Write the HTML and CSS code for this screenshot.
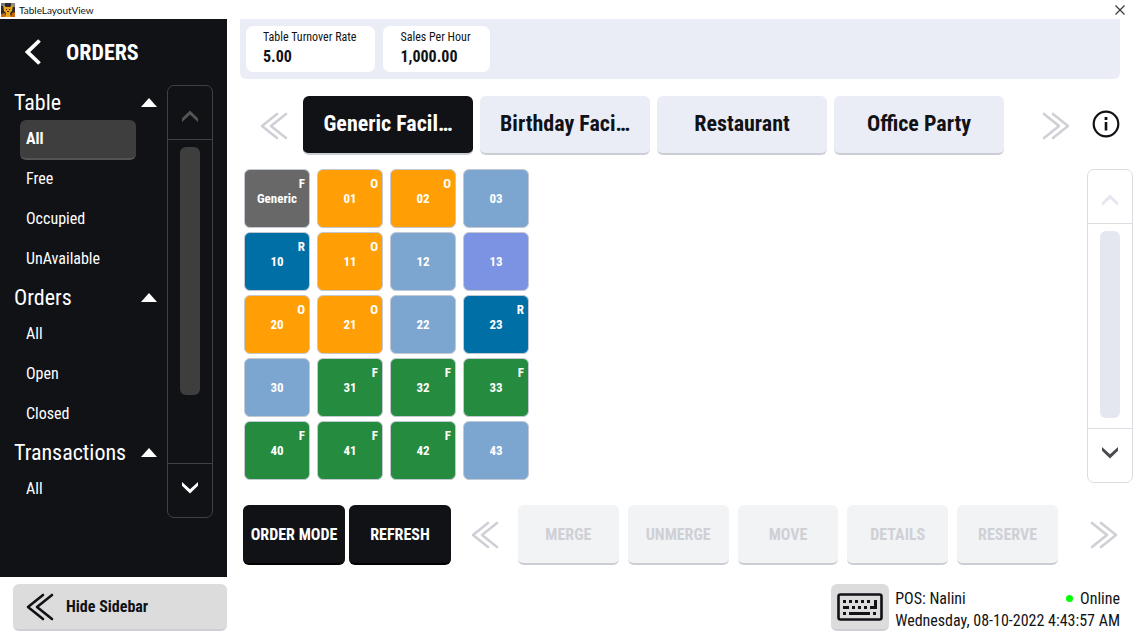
FILE: index.html
```html
<!DOCTYPE html>
<html lang="en">

<head>
    <meta charset="UTF-8">
    <meta name="viewport" content="width=device-width, initial-scale=1.0">
    <title>TableLayoutView</title>
    <link rel="stylesheet" href="styles.css">
</head>

<body>
    <!-- shared icons -->
    <svg class="icon-defs" aria-hidden="true">
        <symbol id="icon-double" viewBox="0 0 28 28">
            <path d="M17 2 L2 14 L17 26 M26 2 L11 14 L26 26" fill="none" stroke="currentColor" stroke-width="2.6" stroke-linecap="round" stroke-linejoin="round"/>
        </symbol>
        <symbol id="icon-up" viewBox="0 0 16 12">
            <path d="M0 8.2 L8 0.5 L16 8.2 V12 L8 4.8 L0 12 Z" fill="currentColor"/>
        </symbol>
        <symbol id="icon-down" viewBox="0 0 16 12">
            <path d="M0 0 L8 7.2 L16 0 V3.8 L8 11.5 L0 3.8 Z" fill="currentColor"/>
        </symbol>
    </svg>

    <header class="titlebar">
        <svg class="app-icon" viewBox="0 0 14 14">
            <rect width="14" height="14" fill="#2e2b2b"/>
            <rect width="4" height="3" fill="#777"/>
            <rect x="10" width="4" height="4" fill="#8a8a8a"/>
            <path d="M2 2 L5 4 H9 L12 2 L11 8 L9 10 L10 14 H4 L5 10 L3 8 Z" fill="#e8a51c"/>
            <path d="M0 11 L4 10 V14 H0 Z M11 10 L14 9 V14 H10 Z" fill="#c66a12"/>
            <rect x="5" y="6" width="1" height="1" fill="#3a2606"/>
            <rect x="8" y="6" width="1" height="1" fill="#3a2606"/>
            <rect x="6" y="8" width="2" height="1" fill="#3a2606"/>
        </svg>
        <span class="titlebar-text">TableLayoutView</span>
        <button class="close-btn" type="button" aria-label="Close">
            <svg viewBox="0 0 10 10"><path d="M0.5 0.5 L9.5 9.5 M9.5 0.5 L0.5 9.5" stroke="#333" stroke-width="1.1"/></svg>
        </button>
    </header>

    <div class="layout">
        <aside class="sidebar">
            <div class="sidebar-header">
                <button class="back-btn" type="button" aria-label="Back">
                    <svg viewBox="0 0 16 26"><path d="M14.5 1.5 L2.6 13 L14.5 24.5" fill="none" stroke="currentColor" stroke-width="3.8"/></svg>
                </button>
                <h1>ORDERS</h1>
            </div>
            <div class="sidebar-body">
                <nav class="menu">
                    <h2>Table <svg viewBox="0 0 16 9"><path d="M0 9 L8 0 L16 9 Z" fill="currentColor"/></svg></h2>
                    <a class="active" href="#">All</a>
                    <a href="#">Free</a>
                    <a href="#">Occupied</a>
                    <a href="#">UnAvailable</a>
                    <h2>Orders <svg viewBox="0 0 16 9"><path d="M0 9 L8 0 L16 9 Z" fill="currentColor"/></svg></h2>
                    <a href="#">All</a>
                    <a href="#">Open</a>
                    <a href="#">Closed</a>
                    <h2>Transactions <svg viewBox="0 0 16 9"><path d="M0 9 L8 0 L16 9 Z" fill="currentColor"/></svg></h2>
                    <a href="#">All</a>
                </nav>
                <div class="scroller scroller-dark">
                    <button type="button" aria-label="Scroll up" disabled><svg><use href="#icon-up"/></svg></button>
                    <div class="track"><div class="thumb"></div></div>
                    <button type="button" aria-label="Scroll down"><svg><use href="#icon-down"/></svg></button>
                </div>
            </div>
        </aside>

        <main class="content">
            <section class="stats">
                <div class="stat">
                    <span>Table Turnover Rate</span>
                    <strong>5.00</strong>
                </div>
                <div class="stat">
                    <span>Sales Per Hour</span>
                    <strong>1,000.00</strong>
                </div>
            </section>

            <section class="facilities">
                <button class="nav-btn" type="button" aria-label="Previous facilities"><svg><use href="#icon-double"/></svg></button>
                <div class="tabs">
                    <button class="tab selected" type="button">Generic Facil…</button>
                    <button class="tab" type="button">Birthday Faci…</button>
                    <button class="tab" type="button">Restaurant</button>
                    <button class="tab" type="button">Office Party</button>
                </div>
                <button class="nav-btn next" type="button" aria-label="Next facilities"><svg><use href="#icon-double"/></svg></button>
                <button class="info-btn" type="button" aria-label="Information">
                    <svg viewBox="0 0 28 28">
                        <circle cx="14" cy="14" r="12.3" fill="none" stroke="currentColor" stroke-width="2.2"/>
                        <path d="M14 12 V20.5" stroke="currentColor" stroke-width="2.6"/>
                        <path d="M14 7 V10" stroke="currentColor" stroke-width="2.8"/>
                    </svg>
                </button>
            </section>

            <section class="floor">
                <div class="tables">
                    <button class="table-tile generic" type="button">Generic<span>F</span></button>
                    <button class="table-tile occupied" type="button">01<span>O</span></button>
                    <button class="table-tile occupied" type="button">02<span>O</span></button>
                    <button class="table-tile" type="button">03</button>
                    <button class="table-tile reserved" type="button">10<span>R</span></button>
                    <button class="table-tile occupied" type="button">11<span>O</span></button>
                    <button class="table-tile" type="button">12</button>
                    <button class="table-tile violet" type="button">13</button>
                    <button class="table-tile occupied" type="button">20<span>O</span></button>
                    <button class="table-tile occupied" type="button">21<span>O</span></button>
                    <button class="table-tile" type="button">22</button>
                    <button class="table-tile reserved" type="button">23<span>R</span></button>
                    <button class="table-tile" type="button">30</button>
                    <button class="table-tile free" type="button">31<span>F</span></button>
                    <button class="table-tile free" type="button">32<span>F</span></button>
                    <button class="table-tile free" type="button">33<span>F</span></button>
                    <button class="table-tile free" type="button">40<span>F</span></button>
                    <button class="table-tile free" type="button">41<span>F</span></button>
                    <button class="table-tile free" type="button">42<span>F</span></button>
                    <button class="table-tile" type="button">43</button>
                </div>
                <div class="scroller">
                    <button type="button" aria-label="Scroll up" disabled><svg><use href="#icon-up"/></svg></button>
                    <div class="track"><div class="thumb"></div></div>
                    <button type="button" aria-label="Scroll down"><svg><use href="#icon-down"/></svg></button>
                </div>
            </section>

            <section class="actions">
                <div class="primary-actions">
                    <button class="action dark" type="button">ORDER MODE</button>
                    <button class="action dark" type="button">REFRESH</button>
                </div>
                <button class="nav-btn" type="button" aria-label="Previous actions"><svg><use href="#icon-double"/></svg></button>
                <div class="table-actions">
                    <button class="action" type="button" disabled>MERGE</button>
                    <button class="action" type="button" disabled>UNMERGE</button>
                    <button class="action" type="button" disabled>MOVE</button>
                    <button class="action" type="button" disabled>DETAILS</button>
                    <button class="action" type="button" disabled>RESERVE</button>
                </div>
                <button class="nav-btn next" type="button" aria-label="Next actions"><svg><use href="#icon-double"/></svg></button>
            </section>
        </main>
    </div>

    <footer class="footer">
        <button class="hide-btn" type="button"><svg><use href="#icon-double"/></svg>Hide Sidebar</button>
        <button class="keyboard-btn" type="button" aria-label="Keyboard">
            <svg viewBox="0 0 46 28">
                <rect x="1.5" y="1.5" width="43" height="25" rx="2" fill="none" stroke="currentColor" stroke-width="2.6"/>
                <g fill="currentColor">
                    <path d="M6 7h3v3H6z M12 7h3v3h-3z M18 7h3v3h-3z M24 7h3v3h-3z M30 7h3v3h-3z"/>
                    <path d="M6 13h6v3H6z M15 13h3v3h-3z M21 13h3v3h-3z M27 13h3v3h-3z"/>
                    <path d="M37 7h3v9h-7v-3h4z"/>
                    <path d="M6 19h3v3H6z M12 19h21v3H12z M36 19h3v3h-3z"/>
                </g>
            </svg>
        </button>
        <div class="status">
            <div class="status-row">
                <span>POS: Nalini</span>
                <span class="online">Online</span>
            </div>
            <div>Wednesday, 08-10-2022 4:43:57 AM</div>
        </div>
    </footer>
</body>

</html>
```
FILE: styles.css
```css
* {
    box-sizing: border-box;
}

body {
    margin: 0;
    min-height: 100vh;
    display: flex;
    flex-direction: column;
    background-color: #fff;
    color: #111216;
    font-family: "Roboto Condensed", "Liberation Sans Narrow", Roboto, sans-serif;
}

button {
    padding: 0;
    border: none;
    background: none;
    color: inherit;
    font-family: inherit;
    cursor: pointer;
}

svg {
    display: block;
}

.icon-defs {
    display: none;
}

/* title bar */
.titlebar {
    display: flex;
    align-items: center;
    gap: 4px;
    height: 19px;
    padding: 0 8px 0 1px;
}

.app-icon {
    width: 14px;
    height: 14px;
}

.titlebar-text {
    flex: 1;
    font-family: Lato, "Open Sans", sans-serif;
    font-size: 10px;
}

.close-btn svg {
    width: 10px;
    height: 10px;
}

.layout {
    flex: 1;
    display: flex;
}

/* sidebar */
.sidebar {
    width: 227px;
    flex-shrink: 0;
    background-color: #111216;
    color: #fff;
}

.sidebar-header {
    display: flex;
    align-items: center;
    gap: 25px;
    height: 66px;
    padding-left: 25px;
}

.back-btn svg {
    width: 16px;
    height: 26px;
}

.sidebar-header h1 {
    margin: 0;
    font-size: 22px;
}

.sidebar-body {
    display: flex;
    gap: 10px;
    padding: 0 14px;
}

.menu {
    flex: 1;
}

.menu h2 {
    display: flex;
    align-items: center;
    justify-content: space-between;
    height: 35px;
    margin: 0;
    font-size: 22px;
    font-weight: normal;
}

.menu h2 svg {
    width: 16px;
    height: 9px;
}

.menu a {
    display: block;
    width: 116px;
    height: 40px;
    margin-left: 6px;
    padding-left: 6px;
    border-radius: 6px;
    color: #fff;
    font-size: 16px;
    line-height: 38px;
    text-decoration: none;
}

.menu a.active {
    background-color: #3e3e3e;
    border-bottom: 2px solid #545454;
    font-weight: bold;
}

/* scroll bars */
.scroller {
    display: flex;
    flex-direction: column;
    width: 46px;
    flex-shrink: 0;
    border: 1px solid #dcdde2;
    border-radius: 7px;
}

.scroller button {
    display: flex;
    align-items: center;
    justify-content: center;
    height: 53px;
    padding-top: 6px;
    color: #4a4a4e;
}

.scroller button:last-child {
    padding: 0 0 6px;
}

.scroller button:disabled {
    color: #e4e7f0;
}

.scroller svg {
    width: 16px;
    height: 12px;
}

.track {
    flex: 1;
    display: flex;
    justify-content: center;
    padding: 7px 0 10px;
    border-top: 1px solid #dcdde2;
    border-bottom: 1px solid #dcdde2;
}

.thumb {
    width: 20px;
    border-radius: 6px;
    background-color: #e4e7f0;
}

.scroller-dark,
.scroller-dark .track {
    border-color: #414145;
}

.scroller-dark {
    height: 433px;
}

.scroller-dark button {
    color: #fff;
}

.scroller-dark button:disabled {
    color: #545454;
}

.scroller-dark .thumb {
    height: 81%;
    background-color: #3e3e3e;
}

/* main area */
.content {
    flex: 1;
    min-width: 0;
    display: flex;
    flex-direction: column;
    padding-left: 13px;
}

.stats {
    display: flex;
    gap: 8px;
    height: 60px;
    margin-right: 13px;
    padding: 7px 6px;
    border-radius: 0 0 6px 6px;
    background-color: #eaedf6;
}

.stat {
    display: flex;
    flex-direction: column;
    padding: 2px 19px 2px 17px;
    border-radius: 7px;
    background-color: #fff;
    font-size: 12px;
    line-height: 18px;
}

.stat strong {
    font-size: 16px;
    line-height: 22px;
}

.nav-btn {
    color: #cfd0d6;
}

.nav-btn svg,
.info-btn svg,
.hide-btn svg {
    width: 28px;
    height: 28px;
}

.nav-btn.next svg {
    transform: scaleX(-1);
}

.facilities {
    display: flex;
    align-items: center;
    padding: 17px 13px 14px 20px;
}

.tabs {
    flex: 1;
    display: flex;
    gap: 7px;
    margin: 0 38px 0 15px;
}

.tab {
    flex: 1;
    height: 59px;
    padding-bottom: 2px;
    border-radius: 6px;
    border-bottom: 2px solid #cbcdd4;
    background-color: #eaedf6;
    font-size: 22px;
    font-weight: bold;
    white-space: nowrap;
}

.tab.selected {
    background-color: #111216;
    color: #fff;
}

.info-btn {
    margin-left: 22px;
    padding-bottom: 4px;
}

.floor {
    flex: 1;
    display: flex;
    justify-content: space-between;
}

.tables {
    display: grid;
    grid-template-columns: repeat(4, 66px);
    grid-auto-rows: 59px;
    align-content: start;
    gap: 4px 7px;
    padding-left: 4px;
}

.table-tile {
    position: relative;
    border: 1px solid #c3c9d2;
    border-radius: 6px;
    background-color: #7ca6cf;
    color: #fff;
    font-size: 13px;
    font-weight: bold;
}

.table-tile span {
    position: absolute;
    top: 6px;
    right: 4px;
}

.table-tile.generic {
    background-color: #686868;
}

.table-tile.occupied {
    background-color: #ff9f05;
}

.table-tile.reserved {
    background-color: #006fa6;
}

.table-tile.free {
    background-color: #258b3e;
}

.table-tile.violet {
    background-color: #7c93e3;
}

.actions {
    display: flex;
    align-items: center;
    padding: 22px 15px 12px 3px;
}

.primary-actions {
    display: flex;
    gap: 4px;
    margin-right: 20px;
}

.action {
    width: 102px;
    height: 60px;
    border-radius: 6px;
    border-bottom: 2px solid #cbcdd4;
    background-color: #f2f3f5;
    color: #cfd0d6;
    font-size: 16px;
    font-weight: bold;
    white-space: nowrap;
}

.action.dark {
    border-color: #000;
    background-color: #111216;
    color: #fff;
}

.table-actions {
    flex: 1;
    display: flex;
    gap: 9px;
    margin: 0 32px 0 19px;
}

.table-actions .action {
    flex: 1;
    width: auto;
}

/* footer */
.footer {
    display: flex;
    align-items: center;
    height: 59px;
    padding: 2px 13px 0;
}

.hide-btn,
.keyboard-btn {
    display: flex;
    align-items: center;
    height: 47px;
    border-radius: 6px;
    border-bottom: 2px solid #cfd0d6;
    background-color: #dcdcdc;
}

.hide-btn {
    gap: 12px;
    width: 214px;
    padding-left: 13px;
    font-size: 16px;
    font-weight: bold;
}

.keyboard-btn {
    justify-content: center;
    width: 58px;
    margin-left: auto;
}

.keyboard-btn svg {
    width: 46px;
    height: 28px;
}

.status {
    margin-left: 6px;
    padding-top: 4px;
    font-size: 16px;
    line-height: 22px;
}

.status-row {
    display: flex;
    justify-content: space-between;
}

.online::before {
    content: "";
    display: inline-block;
    width: 7px;
    height: 7px;
    margin-right: 7px;
    border-radius: 50%;
    background-color: #00ff00;
    vertical-align: 2px;
}
```
